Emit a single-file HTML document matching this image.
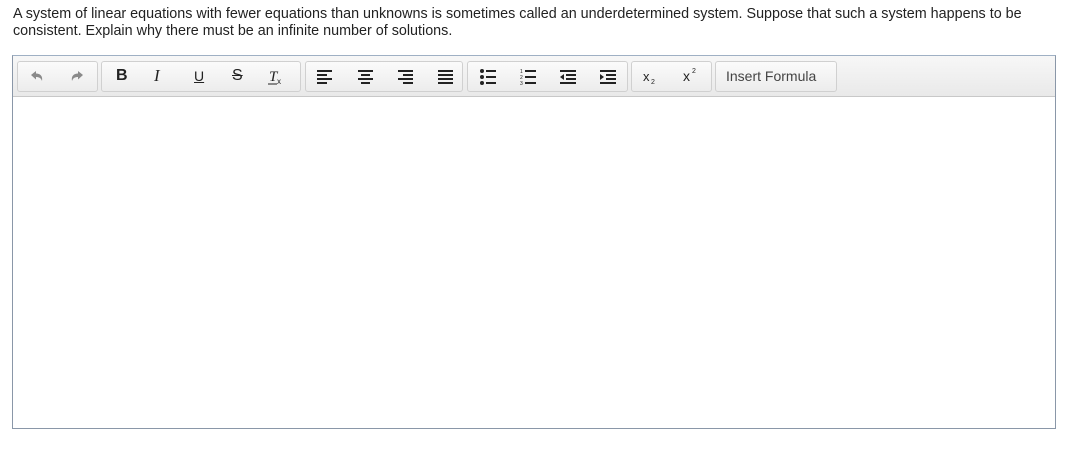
<!DOCTYPE html>
<html><head><meta charset="utf-8"><style>
body{margin:0;background:#fff;width:1068px;height:474px;overflow:hidden;font-family:"Liberation Sans",Arial,sans-serif;}
.q{position:absolute;left:13px;top:6px;width:1040px;font-size:14.35px;line-height:17px;color:#222;}
.box{position:absolute;left:12px;top:55px;width:1042px;height:372px;border:1px solid #8a97a8;border-top-color:#9fb0c4;background:#fff;}
.tb{position:absolute;left:0;top:0;width:1042px;height:40px;background:linear-gradient(#f7f7f7,#e9e9e9);border-bottom:1px solid #c8c8c8;}
.g{position:absolute;top:5px;height:31px;border:1px solid #d0d0d0;border-radius:3px;background:linear-gradient(#fbfbfb,#ececec);box-sizing:border-box;}
.i{position:absolute;top:5px;}
.t{position:absolute;top:6px;font-size:14px;color:#333;}
</style></head><body>
<div class="q">A system of linear equations with fewer equations than unknowns is sometimes called an underdetermined system. Suppose that such a system happens to be consistent. Explain why there must be an infinite number of solutions.</div>
<div class="box"><div class="tb">
<div class="g" style="left:4px;width:81px">
<svg class="i" style="left:12px;top:8px" width="14" height="12"><path d="M1 5 L6 1 L6 3.5 C10 3.5 13 6 12 11 C11 8 9 7 6 7 L6 9.5 Z" fill="#8a8a8a"/></svg>
<svg class="i" style="left:52px;top:8px" width="14" height="12"><path d="M13 5 L8 1 L8 3.5 C4 3.5 1 6 2 11 C3 8 5 7 8 7 L8 9.5 Z" fill="#8a8a8a"/></svg>
</div>
<div class="g" style="left:88px;width:200px">
<span class="t" style="left:14px;top:5px;font-weight:bold;font-size:16px;color:#222">B</span>
<span class="t" style="left:52px;top:4px;font-style:italic;font-size:17px;font-family:'Liberation Serif',serif;color:#222">I</span>
<span class="t" style="left:92px;text-decoration:underline;font-size:14px;color:#222">U</span>
<span class="t" style="left:130px;top:5px;text-decoration:line-through;font-size:16px;color:#222">S</span>
<svg class="i" style="left:165px;top:6px" width="18" height="18"><text x="2" y="13" font-family="Liberation Serif" font-style="italic" font-size="15" fill="#222">T</text><line x1="1" y1="16" x2="10" y2="16" stroke="#222"/><text x="10" y="16" font-size="8" fill="#222" font-family="Liberation Sans">x</text></svg>
</div>
<div class="g" style="left:292px;width:158px">
<svg class="i" style="left:11px;top:8px" width="16" height="14" fill="#222"><rect x="0" y="0" width="15" height="2"/><rect x="0" y="4" width="10" height="2"/><rect x="0" y="8" width="15" height="2"/><rect x="0" y="12" width="10" height="2"/></svg>
<svg class="i" style="left:52px;top:8px" width="16" height="14" fill="#222"><rect x="0" y="0" width="15" height="2"/><rect x="3" y="4" width="9" height="2"/><rect x="0" y="8" width="15" height="2"/><rect x="3" y="12" width="9" height="2"/></svg>
<svg class="i" style="left:92px;top:8px" width="16" height="14" fill="#222"><rect x="0" y="0" width="15" height="2"/><rect x="5" y="4" width="10" height="2"/><rect x="0" y="8" width="15" height="2"/><rect x="5" y="12" width="10" height="2"/></svg>
<svg class="i" style="left:132px;top:8px" width="16" height="14" fill="#222"><rect x="0" y="0" width="15" height="2"/><rect x="0" y="4" width="15" height="2"/><rect x="0" y="8" width="15" height="2"/><rect x="0" y="12" width="15" height="2"/></svg>
</div>
<div class="g" style="left:454px;width:161px">
<svg class="i" style="left:12px;top:7px" width="18" height="16" fill="#222"><circle cx="2" cy="2" r="2"/><circle cx="2" cy="8" r="2"/><circle cx="2" cy="14" r="2"/><rect x="6" y="1" width="10" height="2"/><rect x="6" y="7" width="10" height="2"/><rect x="6" y="13" width="10" height="2"/></svg>
<svg class="i" style="left:52px;top:6px" width="18" height="17" fill="#222"><text x="0" y="5" font-size="5">1</text><text x="0" y="11" font-size="5">2</text><text x="0" y="17" font-size="5">3</text><rect x="5" y="2" width="11" height="2"/><rect x="5" y="8" width="11" height="2"/><rect x="5" y="14" width="11" height="2"/></svg>
<svg class="i" style="left:92px;top:8px" width="18" height="14" fill="#222"><rect x="0" y="0" width="16" height="2"/><rect x="6" y="4" width="10" height="2"/><rect x="6" y="8" width="10" height="2"/><rect x="0" y="12" width="16" height="2"/><path d="M4 4 L0 7 L4 10Z"/></svg>
<svg class="i" style="left:132px;top:8px" width="18" height="14" fill="#222"><rect x="0" y="0" width="16" height="2"/><rect x="6" y="4" width="10" height="2"/><rect x="6" y="8" width="10" height="2"/><rect x="0" y="12" width="16" height="2"/><path d="M0 4 L4 7 L0 10Z"/></svg>
</div>
<div class="g" style="left:618px;width:81px">
<svg class="i" style="left:11px;top:7px" width="16" height="16"><text x="0" y="12" font-size="13" fill="#222">x</text><text x="8" y="15" font-size="7" fill="#222">2</text></svg>
<svg class="i" style="left:51px;top:5px" width="16" height="16"><text x="0" y="14" font-size="14" fill="#222">x</text><text x="9" y="6" font-size="7" fill="#222">2</text></svg>
</div>
<div class="g" style="left:702px;width:122px"><span class="t" style="left:10px;top:6px;font-size:14px;color:#444">Insert Formula</span></div>
</div></div>
</body></html>
